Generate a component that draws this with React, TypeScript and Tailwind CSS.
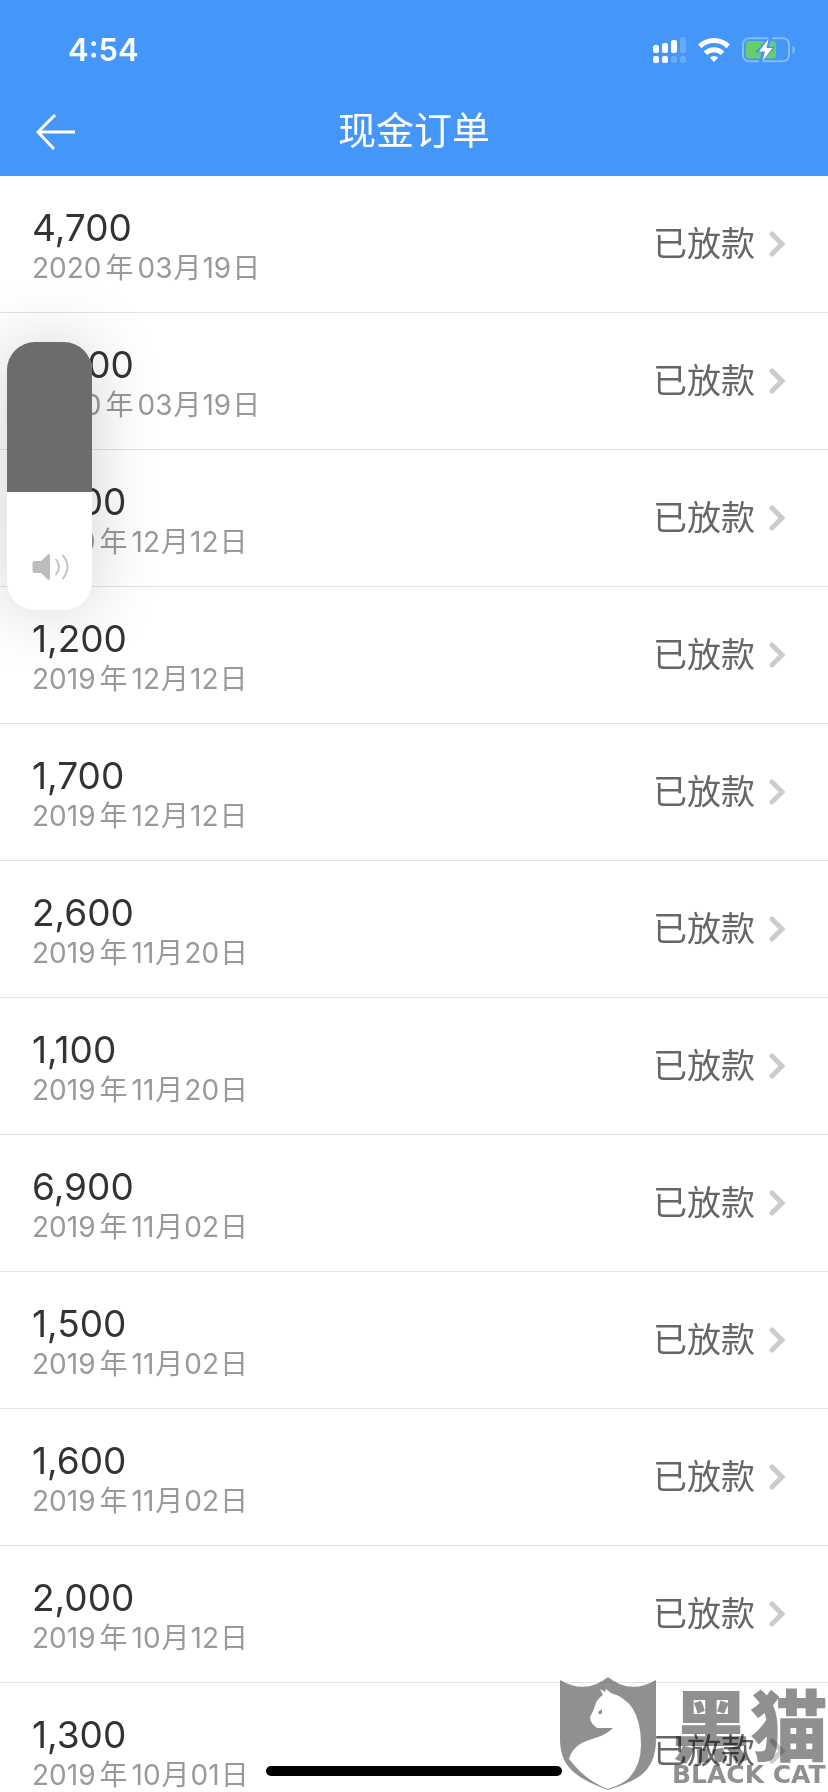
import { useState } from "react";

const orders = [
  { id: 1, amount: 4700, year: "2020", month: "03", day: "19" },
  { id: 2, amount: 2600, year: "2020", month: "03", day: "19" },
  { id: 3, amount: 1500, year: "2019", month: "12", day: "12" },
  { id: 4, amount: 1200, year: "2019", month: "12", day: "12" },
  { id: 5, amount: 1700, year: "2019", month: "12", day: "12" },
  { id: 6, amount: 2600, year: "2019", month: "11", day: "20" },
  { id: 7, amount: 1100, year: "2019", month: "11", day: "20" },
  { id: 8, amount: 6900, year: "2019", month: "11", day: "02" },
  { id: 9, amount: 1500, year: "2019", month: "11", day: "02" },
  { id: 10, amount: 1600, year: "2019", month: "11", day: "02" },
  { id: 11, amount: 2000, year: "2019", month: "10", day: "12" },
  { id: 12, amount: 1300, year: "2019", month: "10", day: "01" },
];

function SignalIcon() {
  return (
    <svg width="33" height="27" viewBox="0 0 33 27" fill="white" aria-hidden="true">
      <rect x="0" y="8" width="6" height="8" rx="2" />
      <rect x="9" y="6" width="6" height="10" rx="2" />
      <rect x="18" y="3" width="6" height="13" rx="2" />
      <rect x="27" y="0" width="6" height="16" rx="2" opacity="0.2" />
      <rect x="0" y="19" width="6" height="7" rx="2" />
      <rect x="9" y="19" width="6" height="7" rx="2" />
      <rect x="18" y="19" width="6" height="7" rx="2" opacity="0.2" />
      <rect x="27" y="19" width="6" height="7" rx="2" opacity="0.2" />
    </svg>
  );
}

function WifiIcon() {
  return (
    <svg width="32" height="24" viewBox="0 0 32 24" aria-hidden="true">
      <g fill="none" stroke="white" strokeWidth="5">
        <path d="M1.8 8.4a20.2 20.2 0 0 1 28.4 0" />
        <path d="M7.4 15.2a12.2 12.2 0 0 1 17.2 0" />
      </g>
      <path d="M16 24l-4.2-4.4a6.2 6.2 0 0 1 8.4 0z" fill="white" />
    </svg>
  );
}

function BatteryIcon() {
  return (
    <svg width="54" height="26" viewBox="0 0 54 26" aria-hidden="true">
      <rect x="1" y="1.2" width="46" height="23" rx="6" fill="none" stroke="#83bbfb" strokeWidth="2" />
      <path d="M50.5 8.5q2.5 1.5 2.5 4.2t-2.5 4.2z" fill="#83bbfb" />
      <rect x="4" y="4" width="30" height="17.5" rx="3" fill="#68ce67" />
      <path d="M27.5 1L15 14.5h6L17.5 26l14-15.5H25L29 1z" fill="#4496f8" stroke="#4496f8" strokeWidth="2" />
      <path d="M26.5 2L17 14.5h6L20.5 24l10-13h-6z" fill="white" />
    </svg>
  );
}

function Volume({ level }: { level: number }) {
  return (
    <div className="absolute left-[7px] top-[342px] flex h-[268px] w-[85px] flex-col overflow-hidden rounded-[28px] bg-white shadow-[0_0_70px_rgba(0,0,0,0.18)]">
      <div className="bg-[#6c6c6c]" style={{ height: `${100 - level}%` }} />
      <div className="flex flex-1 items-end justify-center pb-[29px] pl-[2px]">
        <svg width="38" height="28" viewBox="0 0 38 28" aria-hidden="true">
          <path d="M3 8h6l6.5-6.3Q18 0 18 3v22q0 3-2.5 1.3L9 20H3q-2.5 0-2.5-2.5v-7Q.5 8 3 8z" fill="#bdbdbd" />
          <path d="M24 6.5q6 7.5 0 15M31 2.5q9 11.5 0 23" fill="none" stroke="#c4c4c4" strokeWidth="2" strokeLinecap="round" />
        </svg>
      </div>
    </div>
  );
}

function Watermark() {
  return (
    <div className="pointer-events-none absolute bottom-0 right-0 flex items-end gap-[15px] text-[#918f90] mix-blend-multiply">
      <svg width="98" height="116" viewBox="0 0 98 116" aria-hidden="true">
        <path d="M1 4q26 15 48-3 22 18 48 3v60q0 24-16 36-10 7-32 14-22-8-32-16Q1 86 1 64z" fill="currentColor" />
        <path d="M41 13l5 3 1-3 5 4Q66 21 74 33q8 13 8 36 0 20-12 33-6 6-21 11-22-8-39-30 4-14 20-19 18-5 24-12H38q-7-5-7-11l4-8q2-10 9-14z" fill="white" />
        <path d="M39 36l4-3v4q-3 3-4-1z" fill="currentColor" />
      </svg>
      <div className="flex flex-col">
        <span className="font-['Noto_Sans_CJK_SC',sans-serif] text-[78px] font-black leading-[72px]">黑猫</span>
        <span className="font-['DejaVu_Sans',sans-serif] text-[25px] font-bold leading-[34px]">BLACK CAT</span>
      </div>
    </div>
  );
}

export default function App() {
  const [level] = useState(44);

  return (
    <div className="relative flex h-screen flex-col overflow-hidden bg-white font-['Inter','Noto_Sans_CJK_SC',sans-serif]">
      <header className="shrink-0 bg-[#4496f8] text-white">
        <div className="flex h-[88px] items-center justify-between pl-[68px] pr-8 pt-[12px]">
          <span className="text-[31px] font-semibold leading-[40px]">4:54</span>
          <div className="flex items-center gap-3">
            <SignalIcon />
            <WifiIcon />
            <BatteryIcon />
          </div>
        </div>
        <div className="grid h-[88px] grid-cols-[1fr_auto_1fr] items-center px-9">
          <button type="button" aria-label="返回" className="justify-self-start">
            <svg width="40" height="36" viewBox="0 0 40 36" fill="none" stroke="white" strokeWidth="3" aria-hidden="true">
              <path d="M19 1L2 18l16 17M2 18h37" />
            </svg>
          </button>
          <h1 className="pb-1 text-[38px] leading-[52px]">现金订单</h1>
        </div>
      </header>

      <main className="flex-1 overflow-y-auto [scrollbar-width:none]">
        <ul>
          {orders.map((order) => (
            <li key={order.id} className="border-b border-[#e3e3e3]">
              <a href={`#order-${order.id}`} className="flex h-[136px] items-center justify-between pl-8 pr-[43px]">
                <div className="pt-2">
                  <p className="text-[37px] leading-[40px] text-[#333333]">{order.amount.toLocaleString("en-US")}</p>
                  <p className="flex gap-px text-[28px] leading-[40px] text-[#999999]">
                    <span>{order.year}</span><span className="mx-[3px]">年</span>
                    <span>{order.month}</span><span>月</span>
                    <span>{order.day}</span><span>日</span>
                  </p>
                </div>
                <div className="flex items-center gap-[14px]">
                  <span className="text-[34px] leading-[48px] text-[#666666]">已放款</span>
                  <svg width="16" height="26" viewBox="0 0 16 26" fill="none" stroke="#cccccc" strokeWidth="5" strokeLinecap="round" aria-hidden="true">
                    <path d="M3 3l10 10L3 23" />
                  </svg>
                </div>
              </a>
            </li>
          ))}
        </ul>
      </main>

      <Volume level={level} />
      <div className="absolute bottom-[16px] left-1/2 h-[10px] w-[296px] -translate-x-1/2 rounded-full bg-black" />
      <Watermark />
    </div>
  );
}
